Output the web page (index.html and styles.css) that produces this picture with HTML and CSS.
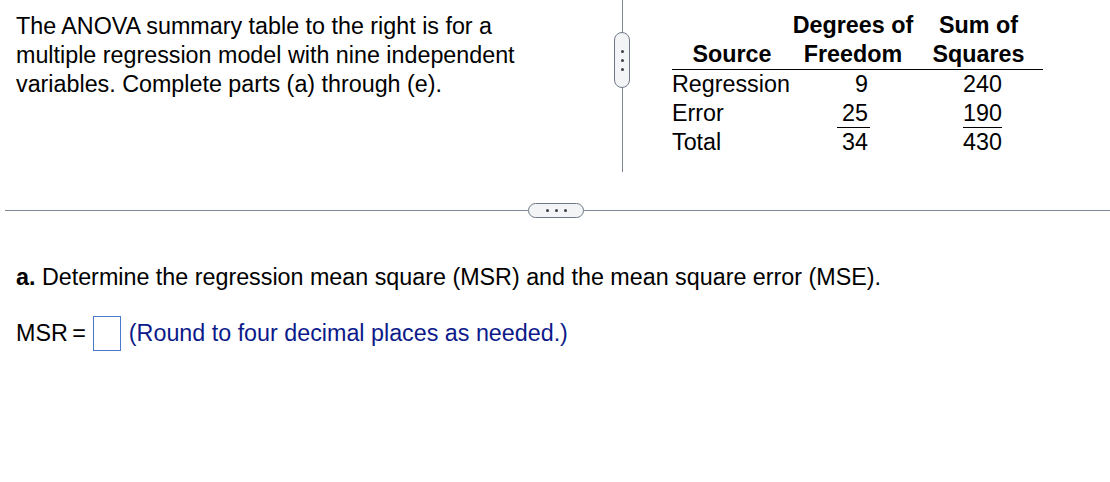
FILE: index.html
```html
<!DOCTYPE html>
<html>
<head>
<meta charset="utf-8">
<link rel="stylesheet" href="styles.css">
</head>
<body>
<div class="top">
  <div class="intro">
    <p>The ANOVA summary table to the right is for a multiple regression model with nine independent variables. Complete parts (a) through (e).</p>
  </div>
  <div class="vdivider">
    <div class="vhandle"><span class="dot"></span><span class="dot"></span><span class="dot"></span></div>
  </div>
  <div class="tablewrap">
    <table class="anova">
      <thead>
        <tr>
          <th class="c1">Source</th>
          <th class="c2">Degrees of<br>Freedom</th>
          <th class="c3">Sum of<br>Squares</th>
        </tr>
      </thead>
      <tbody>
        <tr><td class="c1">Regression</td><td class="c2 num"><span class="v2">9</span></td><td class="c3 num"><span class="v3">240</span></td></tr>
        <tr><td class="c1">Error</td><td class="c2 num"><span class="v2">25</span></td><td class="c3 num"><span class="v3">190</span></td></tr>
        <tr><td class="c1">Total</td><td class="c2 num"><span class="v2 tot">34</span></td><td class="c3 num"><span class="v3 tot">430</span></td></tr>
      </tbody>
    </table>
  </div>
</div>
<div class="hdivider">
  <div class="hline left"></div>
  <div class="hhandle"><span class="dot"></span><span class="dot"></span><span class="dot"></span></div>
  <div class="hline right"></div>
</div>
<div class="part">
  <p class="question"><b>a.</b> Determine the regression mean square (MSR) and the mean square error (MSE).</p>
  <div class="answer">
    <span class="label">MSR =</span>
    <span class="box"></span>
    <span class="hint">(Round to four decimal places as needed.)</span>
  </div>
</div>
</body>
</html>
```

FILE: styles.css
```css
* { box-sizing: border-box; }
html, body { margin: 0; padding: 0; background: #fff; }
body {
  font-family: "Liberation Sans", Arial, sans-serif;
  font-size: 23.3px;
  line-height: 29px;
  color: #000;
  width: 1110px;
  height: 482px;
  overflow: hidden;
}
p { margin: 0; }

.top {
  display: flex;
  height: 172px;
}
.intro {
  flex: 0 0 614px;
  padding: 12px 0 0 16px;
}
.intro p { width: 560px; }

.vdivider {
  flex: 0 0 16px;
  position: relative;
  display: flex;
  justify-content: center;
}
.vdivider::before {
  content: "";
  width: 1px;
  height: 172px;
  background: #7d8794;
}
.vhandle {
  position: absolute;
  left: 0;
  top: 32px;
  width: 16px;
  height: 56px;
  border: 1.5px solid #6f7886;
  border-radius: 8px;
  background: #f3f4f6;
  display: flex;
  flex-direction: column;
  align-items: center;
  justify-content: center;
  gap: 6px;
}
.dot {
  width: 3px;
  height: 3px;
  background: #3a3f47;
  border-radius: 50%;
  display: block;
}

.tablewrap {
  padding: 11px 0 0 42px;
}
.anova {
  border-collapse: collapse;
}
.anova th, .anova td {
  padding: 0;
  line-height: 29px;
  white-space: nowrap;
}
.anova thead th {
  border-bottom: 1px solid #000;
  font-weight: bold;
  text-align: center;
  vertical-align: bottom;
}
.anova .c1 { width: 120px; text-align: left; }
.anova thead .c1 { text-align: center; }
.anova .c2 { width: 122px; }
.anova .c3 { width: 129px; }
.anova td.num { text-align: left; }
.anova td.c2.num { padding-left: 45px; }
.anova td.c3.num { padding-left: 49px; }
.v2, .v3 { display: inline-block; text-align: right; padding-right: 2px; }
.v2 { width: 33px; }
.v3 { width: 39px; }
.tot { box-shadow: 0 -1px 0 #000; }

.hdivider {
  display: flex;
  align-items: center;
  height: 15px;
  margin-top: 31px;
  padding-left: 5px;
}
.hline {
  height: 1px;
  background: #7d8794;
}
.hline.left { width: 523px; }
.hline.right { flex: 1; }
.hhandle {
  width: 56px;
  height: 15px;
  border: 1.5px solid #6f7886;
  border-radius: 8px;
  background: #f3f4f6;
  display: flex;
  align-items: center;
  justify-content: center;
  gap: 6px;
}

.part {
  padding-left: 16px;
  margin-top: 45px;
}
.question b { font-weight: bold; }
.answer {
  display: flex;
  align-items: center;
  margin-top: 24px;
  height: 35px;
}
.label { margin-right: 7px; word-spacing: -2px; }
.box {
  display: inline-block;
  width: 28px;
  height: 35px;
  border: 1px solid #4a78cc;
  margin-right: 8px;
}
.hint { color: #0c1a8a; }
```
